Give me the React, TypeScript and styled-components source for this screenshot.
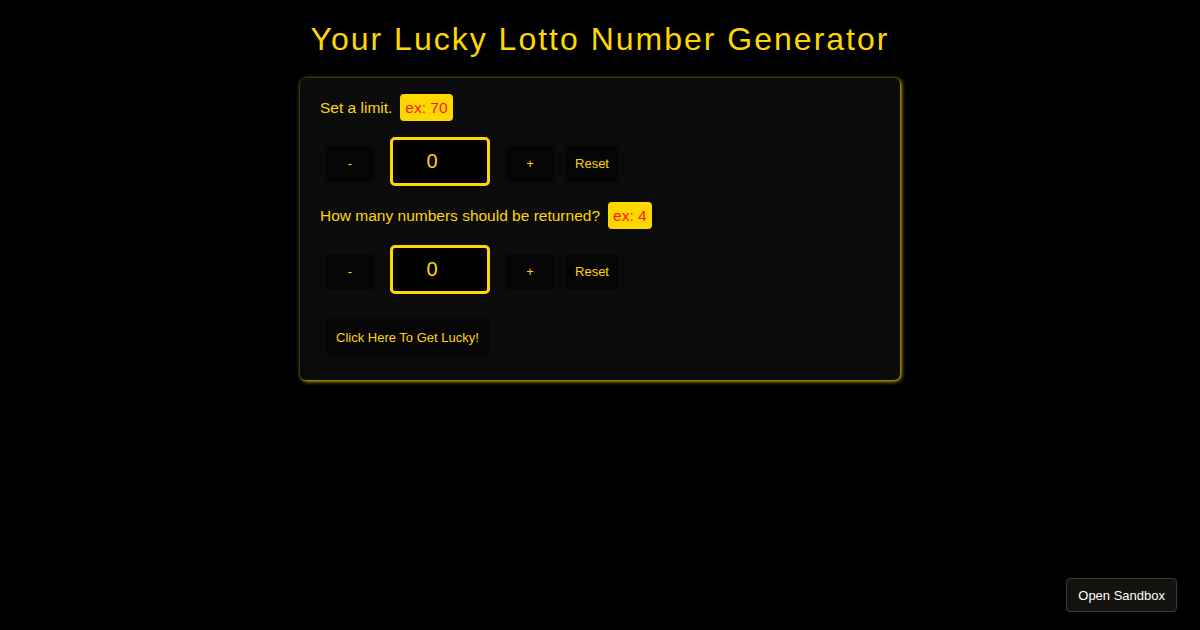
import React, { useState } from 'react';
import styled, { createGlobalStyle } from 'styled-components';

const gold = '#ffd700';

const GlobalStyle = createGlobalStyle`
  html, body {
    margin: 0;
    padding: 0;
    background: #000;
    height: 100%;
  }
  body {
    font-family: "Liberation Sans", Arial, sans-serif;
    color: ${gold};
  }
`;

const Page = styled.div`
  min-height: 630px;
  display: flex;
  flex-direction: column;
  align-items: center;
  padding-top: 20px;
  box-sizing: border-box;
  position: relative;
`;

const Title = styled.h1`
  margin: 0 0 20px;
  font-size: 32px;
  font-weight: 400;
  letter-spacing: 2px;
  line-height: 38px;
  color: ${gold};
`;

const Card = styled.div`
  width: 600px;
  box-sizing: border-box;
  background: #0b0b0b;
  border-radius: 6px;
  box-shadow: 1px 1px 4px ${gold};
  padding: 16px 20px 25px;
  display: flex;
  flex-direction: column;
`;

const LabelRow = styled.div`
  display: flex;
  align-items: center;
  gap: 8px;
  font-size: 15.5px;
  height: 27px;
`;

const Badge = styled.span`
  background: ${gold};
  color: #ff1a1a;
  border-radius: 4px;
  padding: 0 5px;
  height: 27px;
  line-height: 27px;
  font-size: 15.5px;
`;

const ControlRow = styled.div`
  display: flex;
  align-items: center;
  gap: 10px;
  padding-left: 5px;
  margin: 16px 0 16px;
`;

const Button = styled.button`
  width: 50px;
  height: 36px;
  margin-top: 4px;
  background: #050505;
  color: ${gold};
  border: none;
  border-radius: 4px;
  font-family: "Liberation Sans", Arial, sans-serif;
  font-size: 13px;
  padding: 0;
  cursor: pointer;
`;

const ResetButton = styled(Button)`
  width: 54px;
`;

const NumberBox = styled.input`
  width: 100px;
  height: 49px;
  box-sizing: border-box;
  background: #000;
  border: 3px solid ${gold};
  border-radius: 5px;
  color: ${gold};
  font-family: "Liberation Sans", Arial, sans-serif;
  font-size: 20px;
  text-align: center;
  padding: 0 16px 0 0;
  margin: 0 5px;
  outline: none;
`;

const LuckyRow = styled.div`
  padding-left: 5px;
  margin-top: 5px;
`;

const LuckyButton = styled(Button)`
  width: auto;
  padding: 0 11px;
`;

const SandboxButton = styled.button`
  position: absolute;
  right: 23px;
  bottom: 18px;
  height: 34px;
  padding: 0 11px;
  background: #141310;
  color: #fff;
  border: 1px solid #3a3a36;
  border-radius: 4px;
  font-family: "Liberation Sans", Arial, sans-serif;
  font-size: 13px;
`;

type CounterProps = {
  label: string;
  example: string;
  value: number;
  onChange: (v: number) => void;
};

const Counter: React.FC<CounterProps> = ({ label, example, value, onChange }) => (
  <>
    <LabelRow>
      {label}
      <Badge>{example}</Badge>
    </LabelRow>
    <ControlRow>
      <Button onClick={() => onChange(Math.max(0, value - 1))}>-</Button>
      <NumberBox value={value} readOnly />
      <Button onClick={() => onChange(value + 1)}>+</Button>
      <ResetButton onClick={() => onChange(0)}>Reset</ResetButton>
    </ControlRow>
  </>
);

export default function App() {
  const [limit, setLimit] = useState(0);
  const [count, setCount] = useState(0);

  return (
    <Page>
      <GlobalStyle />
      <Title>Your Lucky Lotto Number Generator</Title>
      <Card>
        <Counter label="Set a limit." example="ex: 70" value={limit} onChange={setLimit} />
        <Counter
          label="How many numbers should be returned?"
          example="ex: 4"
          value={count}
          onChange={setCount}
        />
        <LuckyRow>
          <LuckyButton>Click Here To Get Lucky!</LuckyButton>
        </LuckyRow>
      </Card>
      <SandboxButton>Open Sandbox</SandboxButton>
    </Page>
  );
}
